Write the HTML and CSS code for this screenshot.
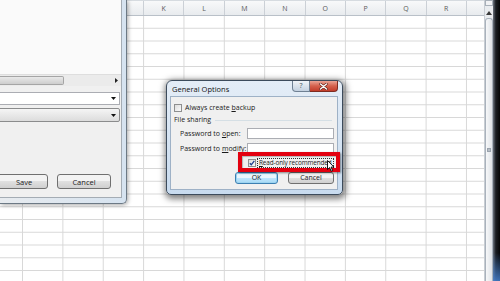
FILE: index.html
```html
<!DOCTYPE html>
<html>
<head>
<meta charset="utf-8">
<link rel="stylesheet" href="styles.css">
</head>
<body>
<div class="app">
  <div class="sheet">
    <div class="colhead">
      <div class="ch">G</div><div class="ch">H</div><div class="ch">I</div><div class="ch">J</div>
      <div class="ch">K</div><div class="ch">L</div><div class="ch">M</div><div class="ch">N</div>
      <div class="ch">O</div><div class="ch">P</div><div class="ch">Q</div><div class="ch">R</div>
      <div class="ch"></div>
    </div>
    <div class="grid"></div>
  </div>
  <div class="vscroll">
    <div class="split"></div>
    <svg class="uparrow" width="6" height="4" viewBox="0 0 6 4"><path d="M0 4 L3 0 L6 4 Z" fill="#3a3a3a"/></svg>
    <div class="thumb"><div class="grip"></div></div>
  </div>
  <div class="edge"></div>
</div>

<div class="saveas">
  <div class="sa-client">
    <div class="list"></div>
    <div class="hscroll">
      <div class="hthumb"></div>
      <svg class="harrow" width="3" height="5" viewBox="0 0 3 5"><path d="M0 0 L3 2.5 L0 5 Z" fill="#222"/></svg>
    </div>
    <div class="sa-body">
      <div class="combo"><svg width="5" height="3" viewBox="0 0 5 3"><path d="M0 0 H5 L2.5 3 Z" fill="#111"/></svg></div>
      <div class="combo btnlike"><svg width="5" height="3" viewBox="0 0 5 3"><path d="M0 0 H5 L2.5 3 Z" fill="#111"/></svg></div>
      <div class="sa-buttons">
        <div class="btn save">Save</div>
        <div class="btn cancel">Cancel</div>
      </div>
    </div>
  </div>
</div>

<div class="dlg">
  <div class="titlebar">
    <div class="title">General Options</div>
    <div class="capbtns">
      <div class="help">?</div>
      <div class="close"><svg width="9" height="7" viewBox="0 0 9 7"><path d="M1.5 1 L7.5 6 M7.5 1 L1.5 6" stroke="#5a1a12" stroke-width="2.6" stroke-linecap="round"/><path d="M1.5 1 L7.5 6 M7.5 1 L1.5 6" stroke="#fff" stroke-width="1.5" stroke-linecap="round"/></svg></div>
    </div>
  </div>
  <div class="dclient">
    <div class="cbrow"><span class="cb"></span><span>Always create <u>b</u>ackup</span></div>
    <div class="group"><span>File sharing</span><span class="rule"></span></div>
    <div class="pwrow"><span class="pwlabel">Password to <u>o</u>pen:</span><span class="field"></span></div>
    <div class="pwrow"><span class="pwlabel">Password to <u>m</u>odify:</span><span class="field"></span></div>
    <div class="rorow"><span class="cb checked"><svg width="6" height="6" viewBox="0 0 6 6"><path d="M0.8 3.2 L2.3 4.8 L5.3 0.8" stroke="#1f3f8f" stroke-width="1.3" fill="none"/></svg></span><span class="rolabel"><u>R</u>ead-only recommended</span></div>
    <div class="dbuttons">
      <div class="dbtn ok">OK</div>
      <div class="dbtn">Cancel</div>
    </div>
  </div>
</div>

<div class="redbox"></div>
<svg class="cursor" width="8" height="12" viewBox="0 0 8 12"><path d="M0.5 0.5 L0.5 9.5 L2.6 7.6 L4.2 11.2 L5.6 10.6 L4.1 7.1 L7 7.1 Z" fill="#fff" stroke="#000" stroke-width="0.9" stroke-linejoin="round"/></svg>
</body>
</html>
```
FILE: styles.css
```css
* { box-sizing: border-box; margin: 0; padding: 0; }
html, body { width: 500px; height: 281px; overflow: hidden; }
body {
  position: relative;
  background: #fff;
  font-family: "Open Sans", "Noto Sans", sans-serif;
  color: #1e1e1e;
  white-space: nowrap;
}
u { text-decoration: underline; text-underline-offset: 1px; }

.app { display: flex; height: 281px; }
.sheet {
  flex: 0 0 484px;
  overflow: hidden;
  display: flex;
  flex-direction: column;
}
.colhead {
  flex: none;
  display: flex;
  height: 16px;
  margin-left: -17.36px;
  background: linear-gradient(#f8f9fa, #e8ebee);
  border-bottom: 1px solid #b9c0c8;
  border-top: 1px solid #d6dbe0;
}
.ch {
  flex: 0 0 40.36px;
  border-right: 1px solid #cbd0d6;
  font-size: 7px;
  color: #5a5a5a;
  display: flex;
  align-items: center;
  justify-content: center;
}
.grid {
  flex: 1;
  background-image:
    linear-gradient(to left, #d8d8d8 1px, transparent 1px),
    linear-gradient(to top, #d8d8d8 1px, transparent 1px);
  background-size: 40.36px 100%, 100% 12.75px;
  background-position: -17.36px 0, 0 0;
}

.vscroll {
  flex: 0 0 9px;
  background: #e9ecef;
  border-left: 1px solid #c8cdd3;
  display: flex;
  flex-direction: column;
  align-items: center;
}
.split {
  flex: none;
  width: 8px;
  height: 6px;
  border: 1px solid #a8b0b9;
  background: #f1f2f4;
}
.uparrow { flex: none; margin-top: 5px; }
.thumb {
  flex: 1;
  width: 8px;
  margin-top: 3px;
  border: 1px solid #a9b2bc;
  border-bottom: none;
  border-radius: 3px 3px 0 0;
  background: linear-gradient(to right, #f7f8f9, #dfe3e8);
  display: flex;
  justify-content: center;
}
.grip {
  width: 4px;
  height: 4px;
  margin-top: 129px;
  background: #b7bec6;
  border: 1px solid #9aa3ad;
}
.edge {
  flex: 0 0 7px;
  background:
    linear-gradient(to bottom, transparent 90%, rgba(70, 130, 210, 0.85)),
    linear-gradient(to right, #6a727d, #1b1e23 40%, #050607);
}

/* Save As window fragment */
.saveas {
  position: absolute;
  left: 0;
  top: 0;
  width: 127px;
  height: 204px;
  padding: 0 4px 5px 0;
  background: linear-gradient(to right, #e7ebef, #d6e3f0);
  border-right: 1px solid #6c7985;
  border-bottom: 1px solid #6c7985;
  border-bottom-right-radius: 5px;
  box-shadow: 1px 1px 4px rgba(0, 0, 0, 0.35);
}
.sa-client {
  height: 100%;
  background: #f0f0f0;
  border-right: 1px solid #a4acb4;
  border-bottom: 1px solid #a4acb4;
  display: flex;
  flex-direction: column;
}
.list {
  flex: none;
  height: 75px;
  background: #fafafa;
  border-bottom: 1px solid #dedede;
}
.hscroll {
  flex: none;
  height: 11px;
  display: flex;
  align-items: center;
  background: #ebebeb;
}
.hthumb {
  width: 64px;
  height: 9px;
  border: 1px solid #a5a5a5;
  border-left: none;
  border-radius: 0 2px 2px 0;
  background: linear-gradient(#e9e9e9, #cdcdcd);
}
.harrow { margin-left: auto; margin-right: 3px; }
.sa-body {
  flex: 1;
  display: flex;
  flex-direction: column;
  gap: 3px;
  padding: 6px 1px 0 0;
}
.combo {
  height: 13px;
  margin-left: -2px;
  border: 1px solid #abadb3;
  background: #fff;
  display: flex;
  align-items: center;
  justify-content: flex-end;
  padding-right: 3px;
}
.combo.btnlike {
  height: 14px;
  border-color: #8b8c8d;
  border-radius: 2px;
  background: linear-gradient(#f5f5f5, #dcdcdc);
}
.sa-buttons {
  margin-top: auto;
  margin-bottom: 8px;
  margin-left: -3px;
  display: flex;
  gap: 9px;
}
.btn {
  height: 15px;
  border: 1px solid #707070;
  border-radius: 3px;
  background: linear-gradient(#f3f3f3 45%, #e0e0e0 50%, #d0d0d0);
  font-size: 7.5px;
  color: #222;
  display: flex;
  align-items: center;
  justify-content: center;
}
.btn.save { width: 51px; padding-left: 3px; }
.btn.cancel { width: 54px; }

/* General Options dialog */
.dlg {
  position: absolute;
  left: 166px;
  top: 80px;
  width: 177px;
  height: 115px;
  border: 1px solid #3c4b5c;
  border-radius: 6px 6px 5px 5px;
  background: linear-gradient(#e4edf7, #c8dbef);
  box-shadow: 1px 2px 6px 2px rgba(0, 0, 0, 0.5);
  display: flex;
  flex-direction: column;
}
.titlebar {
  flex: none;
  height: 15px;
  display: flex;
  align-items: flex-start;
}
.title {
  font-size: 7.5px;
  line-height: 10px;
  padding: 3px 0 0 5px;
  color: #111;
}
.capbtns {
  margin-left: auto;
  margin-right: 4px;
  display: flex;
}
.help {
  width: 18px;
  height: 11px;
  border: 1px solid #6f8093;
  border-top: none;
  border-radius: 0 0 0 4px;
  background: linear-gradient(#f0f4f8, #c3d1e0);
  font-size: 7px;
  line-height: 10px;
  color: #48535f;
  text-align: center;
}
.close {
  width: 28px;
  height: 11px;
  border: 1px solid #7d2b21;
  border-left: none;
  border-top: none;
  border-radius: 0 0 4px 0;
  background: linear-gradient(#eaa394, #d4604c 50%, #c23c2a);
  display: flex;
  align-items: center;
  justify-content: center;
}
.dclient {
  flex: 1;
  margin: 0 4px 4px 3px;
  background: #f0f0f0;
  border: 1px solid #9eb1c6;
  display: flex;
  flex-direction: column;
  padding: 6px 3px 0 3px;
  font-size: 7px;
  line-height: 10px;
  color: #1a1a1a;
}
.cbrow {
  height: 10px;
  display: flex;
  align-items: center;
  gap: 3px;
}
.cb {
  flex: none;
  width: 8px;
  height: 8px;
  border: 1px solid #8e8f8f;
  background: linear-gradient(135deg, #dcdcdc, #fbfbfb);
  display: flex;
  align-items: center;
  justify-content: center;
}
.group {
  margin-top: 3px;
  height: 8px;
  display: flex;
  align-items: center;
  gap: 4px;
}
.rule {
  flex: 1;
  height: 1px;
  background: #d5dfe5;
  margin-right: 2px;
}
.pwrow {
  margin-top: 4px;
  margin-left: 6px;
  height: 11px;
  display: flex;
  align-items: center;
}
.pwrow + .pwrow { margin-top: 4px; }
.pwlabel { flex: 1; }
.field {
  width: 87px;
  height: 11px;
  border: 1px solid #abadb3;
  background: #fff;
}
.rorow {
  margin-top: 4px;
  margin-left: 74px;
  height: 10px;
  display: flex;
  align-items: center;
  gap: 1px;
}
.rolabel {
  flex: none;
  border: 1px dotted #333;
  padding: 0 1px;
  line-height: 8px;
  font-size: 6.4px;
  letter-spacing: -0.12px;
}
.dbuttons {
  margin-top: 4px;
  display: flex;
  justify-content: flex-end;
  gap: 10px;
}
.dbtn {
  width: 46px;
  height: 12px;
  border: 1px solid #707070;
  border-radius: 3px;
  background: linear-gradient(#f3f3f3 45%, #dfdfdf 50%, #d0d0d0);
  font-size: 7px;
  line-height: 10px;
  text-align: center;
  color: #222;
}
.dbtn.ok {
  width: 43px;
  border-color: #3c7fb1;
  background: linear-gradient(#eaf6fd 45%, #bee6fd 50%, #a7d9f5);
  box-shadow: inset 0 0 0 1px #9cd4f1;
}

.redbox {
  position: absolute;
  left: 238px;
  top: 152px;
  width: 102px;
  height: 20px;
  border: 4px solid #e3000f;
  box-shadow: 1px 1px 2px rgba(0, 0, 0, 0.45), inset 1px 1px 1px rgba(0, 0, 0, 0.25);
}
.cursor {
  position: absolute;
  left: 327px;
  top: 160px;
}
```
